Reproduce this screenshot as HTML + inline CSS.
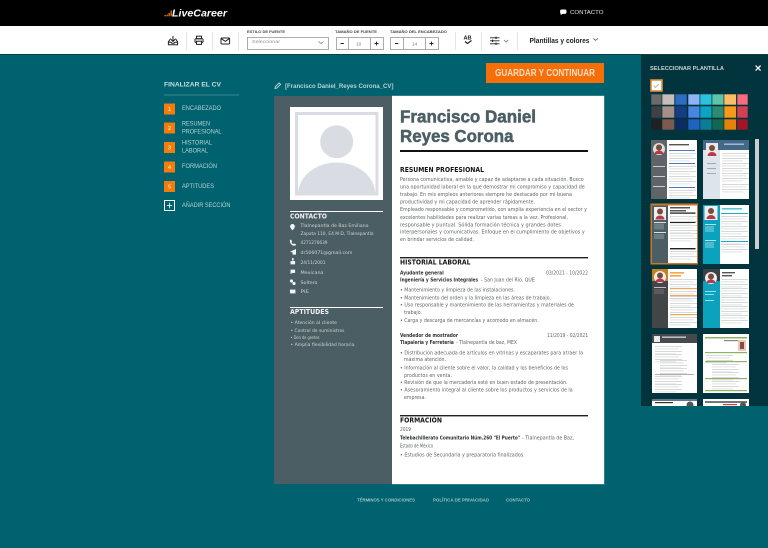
<!DOCTYPE html>
<html lang="es"><head><meta charset="utf-8"><title>LiveCareer</title>
<style>
html,body{margin:0;padding:0;background:#00626e;width:768px;height:548px;overflow:hidden}
svg{display:block;position:absolute;left:0;top:0;filter:blur(.35px)}
text{font-family:"Liberation Sans",sans-serif;white-space:pre}
.s,.d,.c,.h{font-family:"DejaVu Sans","Liberation Sans",sans-serif}
.s{font-size:4.8px;fill:#5f6366}
.d{font-size:4.8px;fill:#2e3134;font-weight:700}
.n{font-size:6px;fill:#b5d3d6}
.c{font-size:4.4px;fill:#cdd5d7}
.h{font-size:6.6px;font-weight:700;fill:#141414}
.l{font-size:4px;font-weight:700;fill:#444}
.f{font-size:4.2px;font-weight:700;fill:#9fc4c8}
</style></head><body>
<svg width="768" height="548" viewBox="0 0 768 548" xmlns="http://www.w3.org/2000/svg">
<defs>
<g id="ln1"><rect x="0" y="0" width="27" height=".8" fill="#ccced0"/><rect x="0" y="2.5" width="24" height=".8" fill="#d8dadb"/><rect x="0" y="5" width="27" height=".8" fill="#ccced0"/><rect x="0" y="7.5" width="21" height=".8" fill="#d8dadb"/></g>
</defs>
<rect width="768" height="548" fill="#00626e"/>
<rect width="768" height="26" fill="#000"/>
<rect y="26" width="768" height="28" fill="#fff"/>
<rect y="54" width="768" height="1" fill="#0b4048"/>

<!-- logo -->
<g fill="#f47a14"><rect x="164.5" y="15" width="1.3" height="1.3"/><rect x="166.5" y="14.5" width="1.3" height="1.8"/><rect x="168.5" y="13" width="1.3" height="3.3"/><rect x="170.5" y="10.5" width="1.3" height="5.8"/></g>
<text x="172" y="16.3" font-size="9.8" font-weight="700" font-style="italic" fill="#fff" textLength="55" lengthAdjust="spacingAndGlyphs">LiveCareer</text>
<path d="M561.5 9.5h3.6a1.6 1.6 0 0 1 1.4 1.6v1.2a1.6 1.6 0 0 1-1.4 1.6h-2.6l-1.8 1.2v-1.4a1.6 1.6 0 0 1-.6-1.4v-1.2a1.6 1.6 0 0 1 1.4-1.6z" fill="#fff"/>
<text x="570" y="14" font-size="5.4" fill="#e4e4e4" textLength="33.5" lengthAdjust="spacingAndGlyphs">CONTACTO</text>

<!-- toolbar separators -->
<g fill="#e2e4e5"><rect x="186" y="32" width="1" height="18"/><rect x="212" y="32" width="1" height="18"/><rect x="238" y="32" width="1" height="18"/><rect x="455" y="32" width="1" height="18"/><rect x="481" y="32" width="1" height="18"/><rect x="517" y="32" width="1" height="18"/></g>
<!-- download icon -->
<g fill="none" stroke="#222" stroke-width="1"><path d="M173 36v5.2M171 39.4l2 2 2-2"/><path d="M170.6 38.6l-2.2 3.2v3h9.2v-3l-2.2-3.2"/><path d="M168.4 42.2h2.8l.7 1h2.2l.7-1h2.8"/></g>
<!-- print icon -->
<g fill="none" stroke="#222" stroke-width="1"><rect x="196.5" y="36.2" width="5" height="2.6"/><rect x="195" y="38.8" width="8" height="3.6" rx=".8"/><rect x="196.5" y="41.2" width="5" height="3.2" fill="#fff"/></g>
<!-- mail icon -->
<g fill="none" stroke="#222" stroke-width="1"><rect x="221" y="38" width="8.6" height="6" rx=".7"/><path d="M221.2 38.6l4.1 2.8 4.1-2.8"/></g>

<text class="l" x="247" y="33" textLength="38" lengthAdjust="spacingAndGlyphs">ESTILO DE FUENTE</text>
<rect x="247.5" y="37.5" width="81" height="12" fill="#fff" stroke="#a9adaf"/>
<text x="252" y="43" font-size="4.8" fill="#8d9092" textLength="28" lengthAdjust="spacingAndGlyphs">Seleccionar</text>
<path d="M318.5 41.5l2.5 2 2.5-2" fill="none" stroke="#777" stroke-width=".8"/>

<text class="l" x="335" y="33" textLength="42" lengthAdjust="spacingAndGlyphs">TAMAÑO DE FUENTE</text>
<rect x="336.5" y="37.5" width="47" height="12" fill="#fff" stroke="#a9adaf"/>
<path d="M348.5 37.5v12M370.5 37.5v12" stroke="#a9adaf"/>
<path d="M340.5 43.5h3.4M374.5 43.5h4M376.5 41.5v4" stroke="#222" stroke-width=".9"/>
<text x="356" y="45.5" font-size="4.8" fill="#777">10</text>

<text class="l" x="390" y="33" textLength="57" lengthAdjust="spacingAndGlyphs">TAMAÑO DEL ENCABEZADO</text>
<rect x="390.5" y="37.5" width="48" height="12" fill="#fff" stroke="#a9adaf"/>
<path d="M403.5 37.5v12M425.5 37.5v12" stroke="#a9adaf"/>
<path d="M395 43.5h3.4M429.5 43.5h4M431.5 41.5v4" stroke="#222" stroke-width=".9"/>
<text x="412" y="45.5" font-size="4.8" fill="#777">14</text>

<text x="463.5" y="39.5" font-size="5.6" font-weight="700" fill="#222">AB</text>
<path d="M465 41.5l2.5 2 4-3" fill="none" stroke="#222" stroke-width="1.2"/>
<path d="M490 37.8h9.5M490 40.8h9.5M490 43.8h9.5" stroke="#222" stroke-width=".9"/>
<path d="M496 36.6v2.4M492.6 39.6v2.4M496 42.6v2.4" stroke="#222" stroke-width="1.1"/>
<path d="M504 40l2.2 2 2.2-2" fill="none" stroke="#666" stroke-width=".8"/>
<text x="529.5" y="43" font-size="7" font-weight="700" fill="#222" textLength="60" lengthAdjust="spacingAndGlyphs">Plantillas y colores</text>
<path d="M593.3 38.4l2.3 2 2.3-2" fill="none" stroke="#555" stroke-width=".8"/>

<!-- left nav -->
<text x="164" y="86.5" font-size="6.8" font-weight="700" fill="#c7dee0" textLength="57" lengthAdjust="spacingAndGlyphs">FINALIZAR EL CV</text>
<rect x="164" y="94.5" width="75" height="1" fill="#3d8791"/>
<g fill="#f57c0a"><rect x="164" y="103.5" width="11" height="11"/><rect x="164" y="122.5" width="11" height="11"/><rect x="164" y="142" width="11" height="11"/><rect x="164" y="161.5" width="11" height="11"/><rect x="164" y="181" width="11" height="11"/></g>
<g font-size="5.6" fill="#ffd9ae" font-weight="700" text-anchor="middle"><text x="169.5" y="111">1</text><text x="169.5" y="130">2</text><text x="169.5" y="149.5">3</text><text x="169.5" y="169">4</text><text x="169.5" y="188.5">5</text></g>
<rect x="164.5" y="200.5" width="10" height="10" fill="none" stroke="#fff"/>
<path d="M169.5 202.8v5.4M166.8 205.5h5.4" stroke="#fff" stroke-width=".8"/>
<text class="n" x="182" y="110" textLength="39" lengthAdjust="spacingAndGlyphs">ENCABEZADO</text>
<text class="n" x="182" y="125.5" textLength="28" lengthAdjust="spacingAndGlyphs">RESUMEN</text>
<text class="n" x="182" y="133.5" textLength="39.5" lengthAdjust="spacingAndGlyphs">PROFESIONAL</text>
<text class="n" x="182" y="144.5" textLength="30" lengthAdjust="spacingAndGlyphs">HISTORIAL</text>
<text class="n" x="182" y="152.5" textLength="26" lengthAdjust="spacingAndGlyphs">LABORAL</text>
<text class="n" x="182" y="168" textLength="35" lengthAdjust="spacingAndGlyphs">FORMACIÓN</text>
<text class="n" x="182" y="188" textLength="32" lengthAdjust="spacingAndGlyphs">APTITUDES</text>
<text class="n" x="182" y="207" textLength="48.5" lengthAdjust="spacingAndGlyphs">AÑADIR SECCIÓN</text>

<!-- file name -->
<path d="M275 88.5l.5-2 3.6-3.6 1.5 1.5-3.6 3.6z" fill="none" stroke="#c5dadc" stroke-width=".9"/>
<text x="285" y="88" font-size="6" font-weight="700" fill="#b7d2d5" textLength="108.5" lengthAdjust="spacingAndGlyphs">[Francisco Daniel_Reyes Corona_CV]</text>

<!-- button -->
<rect x="486" y="63" width="118" height="20" fill="#f56e08"/>
<text x="495" y="76" font-size="10" font-weight="700" fill="#ffdfc5" textLength="100" lengthAdjust="spacingAndGlyphs">GUARDAR Y CONTINUAR</text>

<!-- resume -->
<rect x="392" y="95.5" width="212.5" height="389" fill="#5b9ea6"/>
<rect x="274" y="96" width="330" height="388" fill="#fff"/>
<rect x="274" y="96" width="118" height="388" fill="#4b5e63"/>
<rect x="290" y="107" width="93" height="93" fill="#fff"/>
<rect x="296.5" y="113.5" width="80.5" height="80.5" fill="#fff" stroke="#d9dde3" stroke-width="3"/>
<circle cx="336.7" cy="141.7" r="16.5" fill="#d9dde3"/>
<path d="M298 194.5a38.7 32 0 0 1 77.4 0z" fill="#d9dde3"/>

<rect x="290" y="211" width="93" height="1" fill="#fff"/>
<text class="h" x="290" y="218.5" style="fill:#eef1f2" textLength="37" lengthAdjust="spacingAndGlyphs">CONTACTO</text>
<text class="c" x="300.5" y="227" textLength="68" lengthAdjust="spacingAndGlyphs">Tlalnepantla de Baz Emiliano</text>
<text class="c" x="300.5" y="235" textLength="73" lengthAdjust="spacingAndGlyphs">Zapata 110, E4 M-D, Tlalnepantla</text>
<text class="c" x="300.5" y="244" textLength="27" lengthAdjust="spacingAndGlyphs">4271276639</text>
<text class="c" x="300.5" y="254" textLength="52" lengthAdjust="spacingAndGlyphs">dr506071@gmail.com</text>
<text class="c" x="300.5" y="264" textLength="25" lengthAdjust="spacingAndGlyphs">24/11/2001</text>
<text class="c" x="300.5" y="274" textLength="23" lengthAdjust="spacingAndGlyphs">Mexicana</text>
<text class="c" x="300.5" y="284" textLength="17" lengthAdjust="spacingAndGlyphs">Soltero</text>
<text class="c" x="300.5" y="293" textLength="8.5" lengthAdjust="spacingAndGlyphs">PiE</text>
<g fill="#f2f4f4">
<path d="M292.5 224a2.4 2.4 0 0 1 2.4 2.4c0 1.6-2.4 4-2.4 4s-2.4-2.4-2.4-4a2.4 2.4 0 0 1 2.4-2.4z"/>
<path d="M290 240c.6-.6 1.2-.6 1.5.2l.4 1c.2.5 0 .8-.4 1 .3.9.9 1.5 1.8 1.8.3-.4.6-.6 1-.4l1 .4c.8.3.8.9.2 1.5-2.6 1.4-6.3-2.2-5.5-5.5z"/>
<path d="M290 251.6l6-2.6v5.6h-3.4v-2z"/>
<path d="M290.5 264.4h4.6v-3.4h-4.6z M292 260.5h1.6v-2.4h-1.6z"/>
<path d="M290.5 269.6h4.6v3.4h-3l-1.6 1.2z"/>
<circle cx="291.5" cy="281" r="1.6"/><circle cx="294" cy="283.5" r="1.6"/>
<rect x="290" y="289.6" width="5.4" height="3.8"/>
</g>

<rect x="290" y="307" width="93" height="1" fill="#fff"/>
<text class="h" x="290" y="314" style="fill:#eef1f2" textLength="39" lengthAdjust="spacingAndGlyphs">APTITUDES</text>
<text class="c" x="290.5" y="324" textLength="46.5" lengthAdjust="spacingAndGlyphs">• Atención al cliente</text>
<text class="c" x="290.5" y="332" textLength="54" lengthAdjust="spacingAndGlyphs">• Control de suministros</text>
<text class="c" x="290.5" y="339" textLength="29" lengthAdjust="spacingAndGlyphs">• Don de gentes</text>
<text class="c" x="290.5" y="346" textLength="64" lengthAdjust="spacingAndGlyphs">• Amplia flexibilidad horaria</text>

<!-- main column -->
<text x="400" y="122.5" font-size="17.3" font-weight="700" fill="#4b5e63" textLength="136" lengthAdjust="spacingAndGlyphs" stroke="#4b5e63" stroke-width=".5">Francisco Daniel</text>
<text x="400" y="141.8" font-size="17.3" font-weight="700" fill="#4b5e63" textLength="113.5" lengthAdjust="spacingAndGlyphs" stroke="#4b5e63" stroke-width=".5">Reyes Corona</text>
<rect x="400" y="150" width="188" height="2" fill="#111"/>
<text class="h" x="400" y="172" textLength="84" lengthAdjust="spacingAndGlyphs">RESUMEN PROFESIONAL</text>
<text class="s" x="400" y="181" textLength="183.7" lengthAdjust="spacingAndGlyphs">Persona comunicativa, amable y capaz de adaptarse a cada situación. Busco</text>
<text class="s" x="400" y="188.5" textLength="184.7" lengthAdjust="spacingAndGlyphs">una oportunidad laboral en la que demostrar mi compromiso y capacidad de</text>
<text class="s" x="400" y="196" textLength="172" lengthAdjust="spacingAndGlyphs">trabajo. En mis empleos anteriores siempre he destacado por mi buena</text>
<text class="s" x="400" y="203.5" textLength="135" lengthAdjust="spacingAndGlyphs">productividad y mi capacidad de aprender rápidamente.</text>
<text class="s" x="400" y="211" textLength="187" lengthAdjust="spacingAndGlyphs">Empleado responsable y comprometido, con amplia experiencia en el sector y</text>
<text class="s" x="400" y="219" textLength="168" lengthAdjust="spacingAndGlyphs">excelentes habilidades para realizar varias tareas a la vez. Profesional,</text>
<text class="s" x="400" y="226.5" textLength="161" lengthAdjust="spacingAndGlyphs">responsable y puntual. Sólida formación técnica y grandes dotes</text>
<text class="s" x="400" y="233.5" textLength="184.7" lengthAdjust="spacingAndGlyphs">interpersonales y comunicativas. Enfoque en el cumplimiento de objetivos y</text>
<text class="s" x="400" y="241" textLength="74" lengthAdjust="spacingAndGlyphs">en brindar servicios de calidad.</text>

<rect x="400" y="257" width="188" height="1.4" fill="#222"/>
<text class="h" x="400" y="264.5" textLength="70.5" lengthAdjust="spacingAndGlyphs">HISTORIAL LABORAL</text>
<text class="d" x="400" y="274.7" textLength="43.7" lengthAdjust="spacingAndGlyphs">Ayudante general</text>
<text class="s" x="546" y="274.7" textLength="42" lengthAdjust="spacingAndGlyphs">03/2021 - 10/2022</text>
<text class="d" x="400" y="281.7" textLength="78" lengthAdjust="spacingAndGlyphs">Ingeniería y Servicios Integrales</text>
<text class="s" x="481" y="281.7" textLength="53.7" lengthAdjust="spacingAndGlyphs">- San Juan del Río, QUE</text>
<text class="s" x="400" y="291.3" textLength="115" lengthAdjust="spacingAndGlyphs">• Mantenimiento y limpieza de las instalaciones.</text>
<text class="s" x="400" y="299.7" textLength="151" lengthAdjust="spacingAndGlyphs">• Mantenimiento del orden y la limpieza en las áreas de trabajo.</text>
<text class="s" x="400" y="306.7" textLength="174" lengthAdjust="spacingAndGlyphs">• Uso responsable y mantenimiento de las herramientas y materiales de</text>
<text class="s" x="404" y="314" textLength="18" lengthAdjust="spacingAndGlyphs">trabajo.</text>
<text class="s" x="400" y="322" textLength="138.7" lengthAdjust="spacingAndGlyphs">• Carga y descarga de mercancías y acomodo en almacén.</text>

<text class="d" x="400" y="337" textLength="58" lengthAdjust="spacingAndGlyphs">Vendedor de mostrador</text>
<text class="s" x="547" y="337" textLength="41" lengthAdjust="spacingAndGlyphs">11/2019 - 02/2021</text>
<text class="d" x="400" y="344" textLength="53.7" lengthAdjust="spacingAndGlyphs">Tlapalería y Ferretería</text>
<text class="s" x="456" y="344" textLength="61" lengthAdjust="spacingAndGlyphs">- Tlalnepantla de baz, MEX</text>
<text class="s" x="400" y="354.3" textLength="183" lengthAdjust="spacingAndGlyphs">• Distribución adecuada de artículos en vitrinas y escaparates para atraer la</text>
<text class="s" x="404" y="361" textLength="42" lengthAdjust="spacingAndGlyphs">máxima atención.</text>
<text class="s" x="400" y="369.3" textLength="168" lengthAdjust="spacingAndGlyphs">• Información al cliente sobre el valor, la calidad y los beneficios de los</text>
<text class="s" x="404" y="377" textLength="48" lengthAdjust="spacingAndGlyphs">productos en venta.</text>
<text class="s" x="400" y="384" textLength="167.7" lengthAdjust="spacingAndGlyphs">• Revisión de que la mercadería esté en buen estado de presentación.</text>
<text class="s" x="400" y="391.3" textLength="172.7" lengthAdjust="spacingAndGlyphs">• Asesoramiento integral al cliente sobre los productos y servicios de la</text>
<text class="s" x="404" y="399" textLength="22" lengthAdjust="spacingAndGlyphs">empresa.</text>

<rect x="400" y="415" width="188" height="1.4" fill="#222"/>
<text class="h" x="400" y="422.5" textLength="42" lengthAdjust="spacingAndGlyphs">FORMACIÓN</text>
<text class="s" x="400" y="431" textLength="11" lengthAdjust="spacingAndGlyphs">2019</text>
<text class="d" x="400" y="439.3" textLength="120" lengthAdjust="spacingAndGlyphs">Telebachillerato Comunitario Núm.260 "El Puerto"</text>
<text class="s" x="522" y="439.3" textLength="52" lengthAdjust="spacingAndGlyphs">- Tlalnepantla de Baz,</text>
<text class="s" x="400" y="447.3" textLength="33" lengthAdjust="spacingAndGlyphs">Estado de México</text>
<text class="s" x="400" y="456.7" textLength="124.7" lengthAdjust="spacingAndGlyphs">• Estudios de Secundaria y preparatoria finalizados.</text>

<!-- footer -->
<text class="f" x="357" y="501.5" textLength="58" lengthAdjust="spacingAndGlyphs">TÉRMINOS Y CONDICIONES</text>
<text class="f" x="433" y="501.5" textLength="56" lengthAdjust="spacingAndGlyphs">POLÍTICA DE PRIVACIDAD</text>
<text class="f" x="506" y="501.5" textLength="24" lengthAdjust="spacingAndGlyphs">CONTACTO</text>

<!-- right panel -->
<rect x="641" y="55" width="127" height="351" fill="#02343d"/>
<text x="650" y="70" font-size="5.8" font-weight="700" fill="#c7d3d5" textLength="74" lengthAdjust="spacingAndGlyphs">SELECCIONAR PLANTILLA</text>
<path d="M755.6 65.6l5 5M760.6 65.6l-5 5" stroke="#fff" stroke-width="1.3"/>
<rect x="651" y="80" width="11" height="11" fill="#fff" stroke="#e88a38" stroke-width="1.6"/>
<path d="M653.7 85.8l1.8 1.7 3.4-3.4" fill="none" stroke="#a9aeb0" stroke-width=".9"/>

<g stroke="#02343d" stroke-width=".6">
<rect x="651" y="94" width="11" height="11" fill="#6b6b6b"/><rect x="662" y="94" width="12.6" height="11" fill="#c8bdbb"/><rect x="675" y="94" width="12" height="11" fill="#2f6cc4"/><rect x="688" y="94" width="12" height="11" fill="#8db4f5"/><rect x="700" y="94" width="12" height="11" fill="#29c3e0"/><rect x="712" y="94" width="12" height="11" fill="#5fc4a8"/><rect x="724" y="94" width="12.4" height="11" fill="#fdbd66"/><rect x="737" y="94" width="11" height="11" fill="#f96b80"/>
<rect x="651" y="106" width="11" height="12" fill="#3f4144"/><rect x="662" y="106" width="12.6" height="12" fill="#a68f88"/><rect x="675" y="106" width="12" height="12" fill="#143d85"/><rect x="688" y="106" width="12" height="12" fill="#4a86e0"/><rect x="700" y="106" width="12" height="12" fill="#0aa5c2"/><rect x="712" y="106" width="12" height="12" fill="#2f8a72"/><rect x="724" y="106" width="12.4" height="12" fill="#f79a1c"/><rect x="737" y="106" width="11" height="12" fill="#d43f54"/>
<rect x="651" y="119" width="11" height="11" fill="#1f2123"/><rect x="662" y="119" width="12.6" height="11" fill="#7c5a50"/><rect x="675" y="119" width="12" height="11" fill="#0c2d64"/><rect x="688" y="119" width="12" height="11" fill="#1f62c0"/><rect x="700" y="119" width="12" height="11" fill="#0a7e96"/><rect x="712" y="119" width="12" height="11" fill="#136650"/><rect x="724" y="119" width="12.4" height="11" fill="#e5820a"/><rect x="737" y="119" width="11" height="11" fill="#a31526"/>
</g>

<!-- scrollbar -->
<rect x="755" y="139" width="4" height="110" fill="#c9cfd1"/>

<!-- thumb 1 -->
<rect x="651" y="140" width="46" height="59" fill="#fff"/><rect x="651" y="140" width="16" height="59" fill="#5e6468"/>
<circle cx="659" cy="149" r="6" fill="#ddd"/><circle cx="659" cy="147.5" r="3" fill="#7a4a3a"/><path d="M654.5 154a4.5 3.5 0 0 1 9 0z" fill="#b53a4a"/>
<rect x="653" y="166" width="12" height=".8" fill="#e8e8e8"/><rect x="653" y="176" width="12" height=".8" fill="#e8e8e8"/><rect x="653" y="186" width="12" height=".8" fill="#e8e8e8"/>
<rect x="669" y="144" width="20" height="1.4" fill="#555"/>
<rect x="669" y="150" width="26" height=".9" fill="#3a6bb0"/><use href="#ln1" x="669" y="153"/><rect x="669" y="163" width="26" height=".9" fill="#3a6bb0"/><use href="#ln1" x="669" y="166"/><use href="#ln1" x="669" y="176"/><rect x="669" y="187" width="26" height=".9" fill="#3a6bb0"/><use href="#ln1" x="669" y="190"/>

<!-- thumb 2 -->
<rect x="703" y="140" width="46" height="59" fill="#fff"/><rect x="703" y="140" width="46" height="10" fill="#44688a"/><rect x="703" y="150" width="17" height="49" fill="#dde5ea"/>
<rect x="706" y="143" width="12" height="14" fill="#e8e8e8"/><circle cx="712" cy="148" r="3" fill="#7a4a3a"/><path d="M707.5 156a4.5 4 0 0 1 9 0z" fill="#b53a4a"/>
<rect x="724" y="143.5" width="20" height="1.4" fill="#a8c0d4"/>
<use href="#ln1" x="722" y="153"/><use href="#ln1" x="722" y="163"/><use href="#ln1" x="722" y="173"/><use href="#ln1" x="722" y="184"/>
<rect x="707" y="163" width="9" height=".8" fill="#999"/><rect x="707" y="168" width="9" height=".8" fill="#999"/><rect x="707" y="173" width="9" height=".8" fill="#999"/>

<!-- thumb 3 selected -->
<rect x="650.5" y="203.5" width="47.5" height="61" fill="#c9772b"/>
<rect x="652" y="205.5" width="45" height="57.5" fill="#fff"/><rect x="652" y="205.5" width="16" height="57.5" fill="#4b5e63"/>
<rect x="654" y="207" width="12" height="13" fill="#eee"/><circle cx="660" cy="211.5" r="3" fill="#7a4a3a"/><path d="M655.5 219.5a4.5 4 0 0 1 9 0z" fill="#b53a4a"/>
<rect x="654" y="222" width="12" height=".8" fill="#fff"/><rect x="654" y="232" width="12" height=".8" fill="#fff"/><rect x="654" y="223.5" width="10" height="6" fill="#6b7e83"/><rect x="654" y="234" width="10" height="5" fill="#6b7e83"/>
<rect x="670" y="207" width="20" height="1.5" fill="#555"/><rect x="670" y="210" width="16" height="1.5" fill="#555"/><rect x="670" y="212.5" width="25.5" height="1.2" fill="#111"/>
<use href="#ln1" x="670" y="216"/><rect x="670" y="222" width="25.5" height="1" fill="#222"/><use href="#ln1" x="670" y="225"/><use href="#ln1" x="670" y="233"/><rect x="670" y="248" width="25.5" height="1.4" fill="#222"/><use href="#ln1" x="670" y="251"/>

<!-- thumb 4 -->
<rect x="703" y="205" width="46" height="59" fill="#fff"/><rect x="703" y="205" width="17" height="59" fill="#0aa2bd"/>
<rect x="704.5" y="206" width="13" height="14" fill="#eee"/><circle cx="711" cy="211" r="3" fill="#7a4a3a"/><path d="M706.5 219a4.5 4 0 0 1 9 0z" fill="#b53a4a"/>
<rect x="705" y="224" width="11" height=".8" fill="#d8f2f7"/><rect x="705" y="240" width="11" height=".8" fill="#d8f2f7"/><rect x="705" y="226" width="9" height="6" fill="#4cbcd2"/><rect x="705" y="242" width="9" height="6" fill="#4cbcd2"/>
<rect x="722" y="208" width="20" height="1.6" fill="#62c4d8"/><rect x="721" y="213" width="27" height=".9" fill="#0aa2bd"/><use href="#ln1" x="721" y="216"/><use href="#ln1" x="721" y="226"/><use href="#ln1" x="721" y="236"/><rect x="721" y="241" width="27" height=".9" fill="#0aa2bd"/><use href="#ln1" x="721" y="244"/>

<!-- thumb 5 -->
<rect x="652" y="269" width="45" height="59" fill="#fff"/><rect x="652" y="269" width="16" height="59" fill="#444547"/><rect x="652" y="269" width="16" height="12" fill="#c77f22"/>
<circle cx="660" cy="277" r="6" fill="#eee"/><circle cx="660" cy="275.5" r="3" fill="#7a4a3a"/><path d="M655.5 282a4.5 3.5 0 0 1 9 0z" fill="#b53a4a"/>
<rect x="654" y="287" width="12" height=".8" fill="#ddd"/><rect x="654" y="289" width="10" height="5" fill="#5a5b5d"/>
<rect x="670" y="272" width="14" height="1.6" fill="#f5a54a"/><rect x="670" y="275" width="11" height="1.6" fill="#f5a54a"/>
<use href="#ln1" x="670" y="279"/><rect x="670" y="288" width="27" height="1.2" fill="#eeaa5c"/><use href="#ln1" x="670" y="291"/><rect x="670" y="295" width="27" height="1.2" fill="#eeaa5c"/><use href="#ln1" x="670" y="298"/><use href="#ln1" x="670" y="307"/><rect x="670" y="314" width="27" height="1.2" fill="#eeaa5c"/><use href="#ln1" x="670" y="317"/>

<!-- thumb 6 -->
<rect x="703" y="269" width="46" height="59" fill="#fff"/><rect x="703" y="269" width="17" height="59" fill="#0aa2bd"/><rect x="703" y="269" width="17" height="12" fill="#3d4042"/>
<circle cx="711" cy="278" r="6" fill="#eee"/><circle cx="711" cy="276.5" r="3" fill="#7a4a3a"/><path d="M706.5 283a4.5 3.5 0 0 1 9 0z" fill="#b53a4a"/>
<rect x="705" y="291" width="11" height=".8" fill="#bfe9f2"/><rect x="705" y="294" width="9" height=".8" fill="#bfe9f2"/><rect x="705" y="300" width="9" height=".8" fill="#bfe9f2"/>
<rect x="722" y="272" width="13" height="1.4" fill="#555"/><rect x="722" y="275" width="10" height="1.4" fill="#555"/>
<use href="#ln1" x="721" y="279"/><use href="#ln1" x="721" y="288"/><use href="#ln1" x="721" y="297"/><use href="#ln1" x="721" y="306"/><use href="#ln1" x="721" y="315"/>

<!-- thumb 7 -->
<rect x="652" y="334" width="45" height="59" fill="#fff"/><rect x="652" y="334" width="45" height="9" fill="#474a4d"/><rect x="654" y="336" width="6" height="6" fill="#e8e8e8"/><rect x="662" y="336.5" width="24" height="1.4" fill="#ccc"/>
<use href="#ln1" x="655" y="346"/><use href="#ln1" x="655" y="354"/><use href="#ln1" x="660" y="360"/><use href="#ln1" x="660" y="368"/><rect x="655" y="374" width="39" height=".8" fill="#999"/><use href="#ln1" x="655" y="376"/><use href="#ln1" x="655" y="384"/>

<!-- thumb 8 -->
<rect x="703" y="334" width="46" height="59" fill="#fff"/><rect x="705" y="337" width="42" height="1.5" fill="#8db363"/><rect x="724" y="340" width="14" height="1.2" fill="#888"/>
<rect x="738" y="340" width="8" height="11" fill="#e9c9b9"/><rect x="740" y="342" width="4" height="7" fill="#8a4a3f"/><rect x="705" y="352" width="42" height="1.2" fill="#8db363"/><rect x="705" y="361" width="42" height="1.2" fill="#8db363"/>
<use href="#ln1" x="706" y="355"/><use href="#ln1" x="712" y="364"/><use href="#ln1" x="712" y="372"/><rect x="705" y="378" width="42" height="1.2" fill="#8db363"/><use href="#ln1" x="712" y="381"/><rect x="705" y="390" width="42" height="1.2" fill="#8db363"/>

<!-- thumb 9 / 10 clipped -->
<rect x="652" y="399" width="45" height="7" fill="#fff"/><rect x="652" y="399" width="45" height="2" fill="#5f7a8c"/><rect x="655" y="402" width="18" height="1.2" fill="#333"/><circle cx="690" cy="405" r="3.5" fill="#555"/>
<rect x="703" y="399" width="46" height="7" fill="#fff"/><rect x="705" y="401" width="42" height="2" fill="#777"/><rect x="723" y="404" width="14" height="1.2" fill="#c44"/><circle cx="743" cy="405" r="3" fill="#555"/>
<rect x="641" y="406" width="127" height="10" fill="#00626e"/>
</svg>
</body></html>
